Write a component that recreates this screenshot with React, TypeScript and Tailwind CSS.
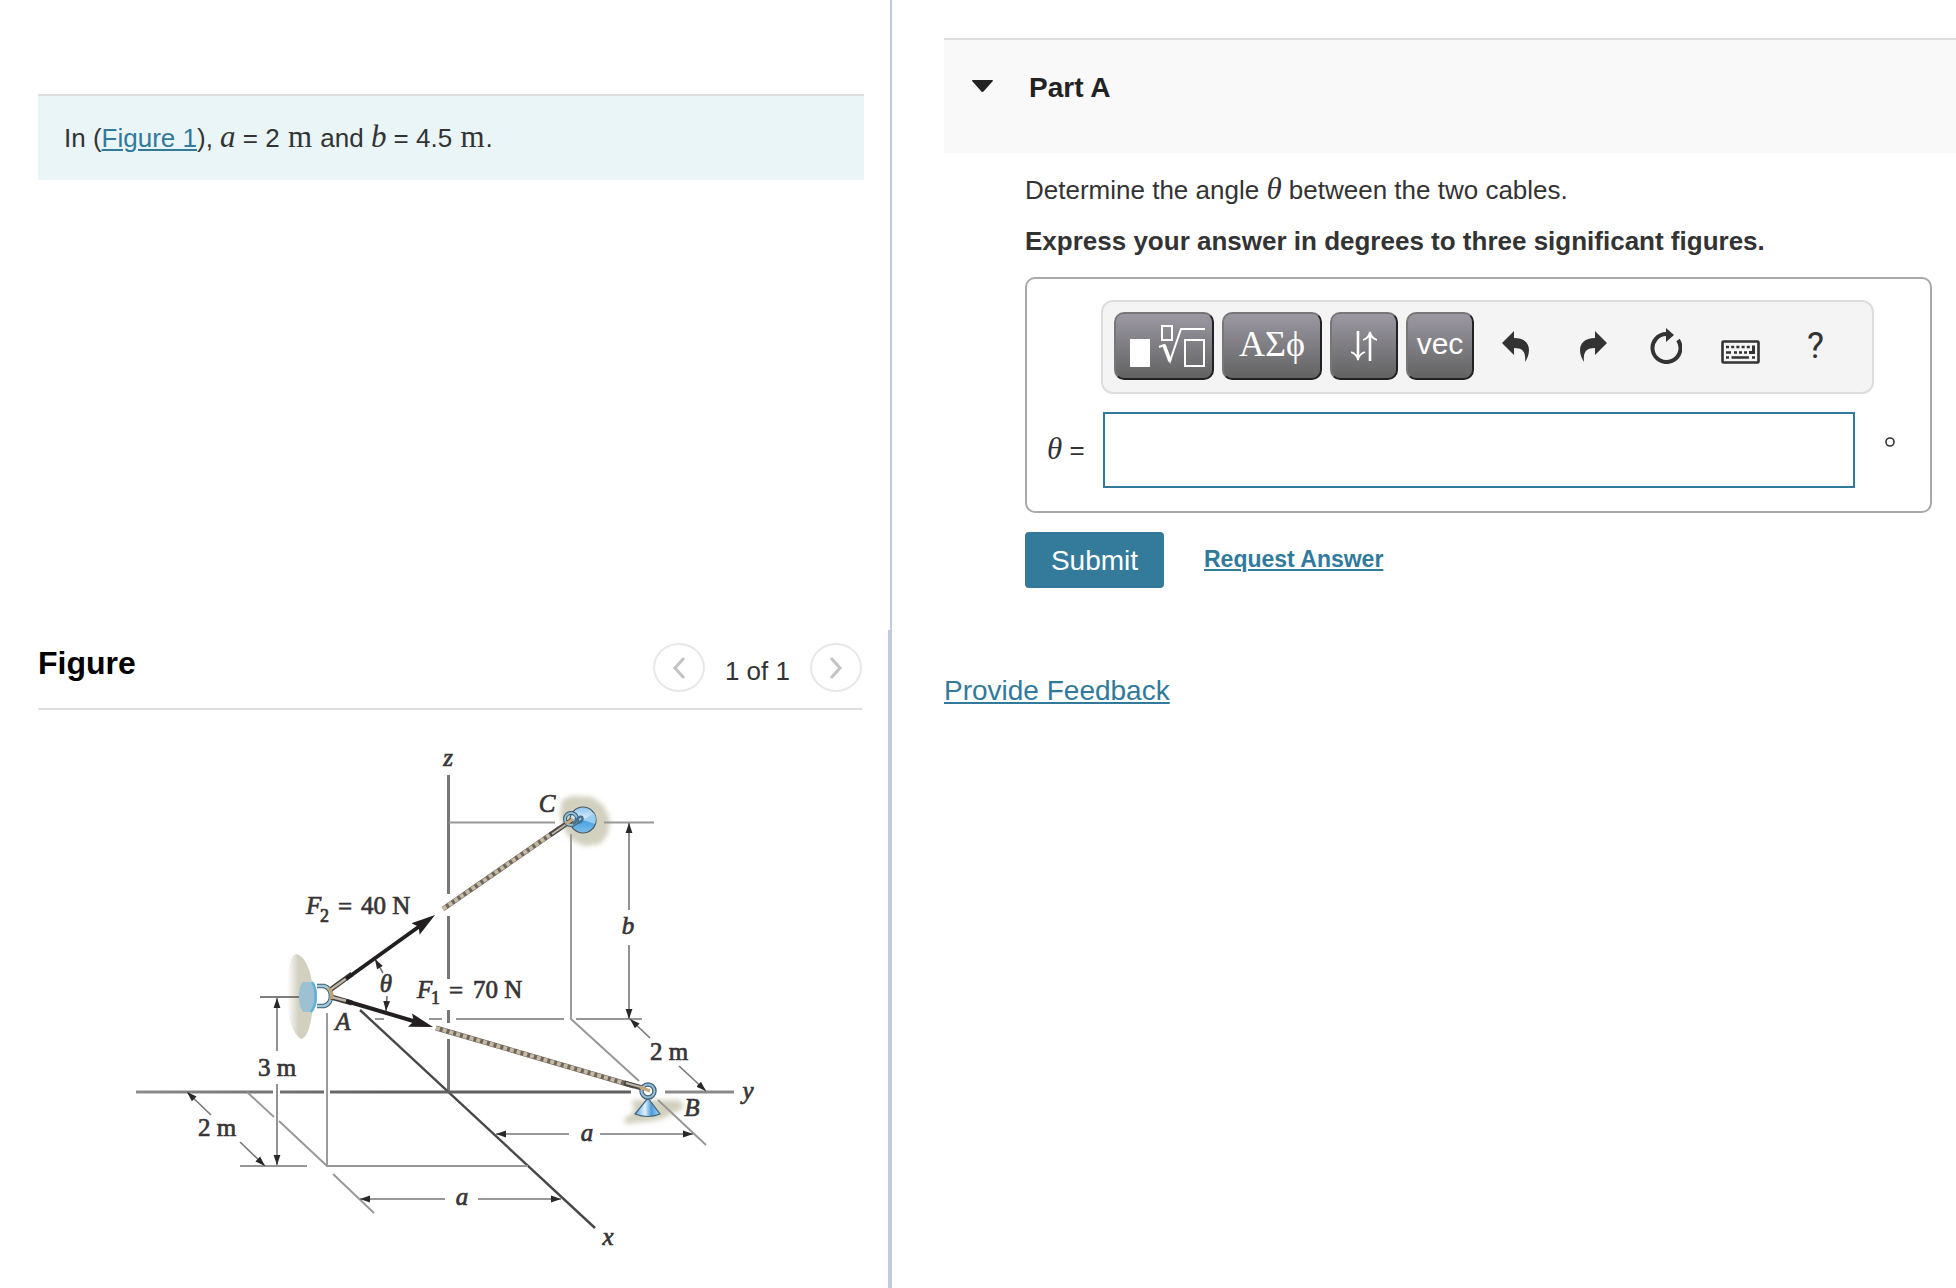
import { ReactNode } from "react";

const linkClass = "text-[#317a9b] underline underline-offset-2 decoration-2";

interface DimProps {
  from: [number, number];
  to: [number, number];
}

// thin dimension line with an arrowhead at its end
function Dim({ from, to }: DimProps) {
  return (
    <line
      x1={from[0]}
      y1={from[1]}
      x2={to[0]}
      y2={to[1]}
      stroke="#777"
      strokeWidth="1.6"
      markerEnd="url(#dimHead)"
    />
  );
}

interface RopeProps {
  d: string;
}

function Rope({ d }: RopeProps) {
  return (
    <g fill="none">
      <path d={d} stroke="#6f675d" strokeWidth="5" />
      <path d={d} stroke="#c8baa2" strokeWidth="4" strokeDasharray="4 3" />
    </g>
  );
}

function CableFigure() {
  return (
    <svg viewBox="38 710 824 560" className="block w-full" role="img" aria-label="Two cables AB and AC attached at A">
      <defs>
        <marker id="dimHead" viewBox="0 0 10 8" refX="10" refY="4" markerWidth="10" markerHeight="8" markerUnits="userSpaceOnUse" orient="auto">
          <path d="M0 0.6 L10 4 L0 7.4 Z" fill="#2b2728" />
        </marker>
        <marker id="forceHead" viewBox="0 0 24 16" refX="24" refY="8" markerWidth="24" markerHeight="16" markerUnits="userSpaceOnUse" orient="auto">
          <path d="M0 1 L24 8 L0 15 L4 8 Z" fill="#231f20" />
        </marker>
        <filter id="soft" x="-20%" y="-20%" width="140%" height="140%">
          <feGaussianBlur stdDeviation="2.5" />
        </filter>
        <linearGradient id="wallFade">
          <stop offset="0" stopColor="#d2d0bf" stopOpacity="0" />
          <stop offset="0.45" stopColor="#d2d0bf" />
        </linearGradient>
        <linearGradient id="ball" x1="0" y1="0" x2="0" y2="1">
          <stop offset="0" stopColor="#8ec3ee" />
          <stop offset="0.42" stopColor="#d3eafb" />
          <stop offset="0.55" stopColor="#4aa3e0" />
          <stop offset="1" stopColor="#7fbdea" />
        </linearGradient>
        <linearGradient id="cone">
          <stop offset="0" stopColor="#5ba6dd" />
          <stop offset="0.4" stopColor="#e2f1fc" />
          <stop offset="0.65" stopColor="#4b9cda" />
          <stop offset="1" stopColor="#a8d2f0" />
        </linearGradient>
        <linearGradient id="yAxis" gradientUnits="userSpaceOnUse" x1="136" y1="0" x2="631" y2="0">
          <stop offset="0" stopColor="#8c8c8c" />
          <stop offset="0.5" stopColor="#606060" />
          <stop offset="1" stopColor="#606060" />
        </linearGradient>
      </defs>

      {/* supports' shaded surfaces */}
      <path d="M562 800 L572 796 L592 797 L604 806 L610 820 L608 834 L600 844 L584 846 L572 840 L564 830 L560 816 Z" fill="#d2d0bf" filter="url(#soft)" />
      <path d="M296 954 C306 956 313 974 313 997 C313 1020 308 1038 301 1039 C290 1032 287 1012 287 990 C287 970 290 956 296 954 Z" fill="url(#wallFade)" />
      <path d="M632 1100 L680 1100 L684 1108 L664 1118 L654 1121 L626 1124 L624 1119 L634 1112 Z" fill="#d2d0bf" filter="url(#soft)" />

      {/* axes */}
      <g stroke="#777" strokeWidth="3" fill="none">
        <path d="M448.5 775 V894 M448.5 916 V979 M448.5 1010 V1023 M448.5 1039 V1092" />
        <path d="M665 1092 H734" stroke="#8a8a8a" />
        <path d="M360 1010 L595 1228" stroke="#484848" strokeWidth="2.4" />
      </g>
      <g fill="url(#yAxis)">
        <rect x="136" y="1090.5" width="137" height="3" />
        <rect x="280" y="1090.5" width="44" height="3" />
        <rect x="330" y="1090.5" width="301" height="3" />
      </g>

      {/* reference lines */}
      <g stroke="#979797" strokeWidth="1.9" fill="none">
        <path d="M449 822.5 H555 M604 822.5 H654" />
        <path d="M571 834 V1019 L639 1081" />
        <path d="M375 1019 H384 M429 1019 H442 M456 1019 H564 M576 1019 H642" />
        <path d="M260 997 H304" stroke="#555" strokeWidth="1.5" />
        <path d="M327 1013 V1166 H528" />
        <path d="M240 1166 H307" />
        <path d="M247 1092 L274 1117 M279 1121 L327 1166" />
        <path d="M333 1174 L374 1213 M658 1100 L706 1145" />
      </g>

      {/* dimensions */}
      <Dim from={[629, 910]} to={[629, 823]} />
      <Dim from={[629, 945]} to={[629, 1019]} />
      <Dim from={[277, 1051]} to={[277, 998]} />
      <Dim from={[277, 1084]} to={[277, 1165]} />
      <Dim from={[211, 1115]} to={[187, 1092]} />
      <Dim from={[240, 1142]} to={[265, 1166]} />
      <Dim from={[650, 1038]} to={[630, 1019]} />
      <Dim from={[679, 1066]} to={[706, 1091]} />
      <Dim from={[569, 1134]} to={[496, 1134]} />
      <Dim from={[600, 1134]} to={[693, 1134]} />
      <Dim from={[445, 1199]} to={[360, 1199]} />
      <Dim from={[478, 1199]} to={[561, 1199]} />
      <Dim from={[383, 973]} to={[375, 959]} />
      <Dim from={[387, 996]} to={[386, 1011]} />

      <Rope d="M443 909 L560 828" />
      <Rope d="M436 1028 L634 1086" />

      {/* ball at C */}
      <circle cx="583" cy="820" r="13" fill="url(#ball)" stroke="#4a5560" strokeWidth="1.2" />
      <path d="M583 820 L594 813 A13 13 0 0 1 595 824 Z" fill="#9bcdf2" />
      <path d="M550 835 L572 820" stroke="#4b4743" strokeWidth="5" />
      <path d="M552 834 L571 821" stroke="#b9b4a8" strokeWidth="2" />
      <circle cx="571" cy="819" r="6" fill="none" stroke="#3f5a6a" strokeWidth="4" />
      <circle cx="571" cy="819" r="6" fill="none" stroke="#8fc0d8" strokeWidth="2" />
      <path d="M573 824 C577 824 576 815 582 817 C584 820 580 823 577 823" fill="none" stroke="#48708a" strokeWidth="2.4" />
      <path d="M566 824 L573 819" stroke="#c9a878" strokeWidth="3" />

      {/* wall plate at A */}
      <path d="M303 982 H312 C316 985 317 991 317 997 C317 1004 315 1009 311 1012 H303 C300 1008 299 1003 299 997 C299 990 300 985 303 982 Z" fill="#9dc1d3" />
      <path d="M312 982 C317 988 317 1005 311 1012" fill="none" stroke="#5fb0dc" strokeWidth="2.4" />
      <path d="M318 987 H324 Q330 989 330 996 Q330 1003 324 1005 H318 Z" fill="#fff" />
      <path d="M317 986 H324 Q331 988 331 996 Q331 1004 324 1006 H317" fill="none" stroke="#4b5b66" strokeWidth="4.6" />
      <path d="M317 986 H324 Q331 988 331 996 Q331 1004 324 1006 H317" fill="none" stroke="#9cc9e2" strokeWidth="2.6" />
      <path d="M330 990 L352 974 M331 997 L352 1003" stroke="#3f3b38" strokeWidth="5" />
      <path d="M330 990 L347 978 M331 997 L347 1001" stroke="#bdb5a6" strokeWidth="2.4" />
      <path d="M328 988 Q334 992 331 999" fill="none" stroke="#c2a273" strokeWidth="3" />

      {/* forces */}
      <path d="M346 979 L424 923" stroke="#231f20" strokeWidth="4" />
      <path d="M346 979 L435 915" stroke="none" markerEnd="url(#forceHead)" />
      <path d="M346 1001 L420 1023" stroke="#231f20" strokeWidth="4" />
      <path d="M346 1001 L433 1027" stroke="none" markerEnd="url(#forceHead)" />

      {/* pin at B */}
      <path d="M624 1083 L646 1089" stroke="#4b4743" strokeWidth="5" />
      <path d="M626 1083 L644 1088" stroke="#b9b4a8" strokeWidth="2" />
      <path d="M648 1098 L660 1114 Q648 1119 635 1114 Z" fill="url(#cone)" stroke="#44617a" strokeWidth="1.2" />
      <circle cx="648" cy="1091" r="6.5" fill="#fff" stroke="#3f5a6a" strokeWidth="4.4" />
      <circle cx="648" cy="1091" r="6.5" fill="none" stroke="#8fc0d8" strokeWidth="2.2" />
      <path d="M640 1087 L650 1091" stroke="#c9a878" strokeWidth="3" />

      <g fill="#383435" stroke="#383435" strokeWidth="0.7" className="text-[25px] font-['Liberation_Serif',serif]">
        <text x="258" y="1076">3 m</text>
        <text x="198" y="1136">2 m</text>
        <text x="650" y="1060">2 m</text>
        <text x="338" y="915">=</text>
        <text x="361" y="914">40 N</text>
        <text x="449" y="999">=</text>
        <text x="473" y="998">70 N</text>
        <text x="320" y="922" className="text-[18px]">2</text>
        <text x="431" y="1004" className="text-[18px]">1</text>
        <g className="italic">
          <text x="306" y="914">F</text>
          <text x="417" y="998">F</text>
          <g textAnchor="middle">
            <text x="448" y="766">z</text>
            <text x="547" y="812">C</text>
            <text x="628" y="934">b</text>
            <text x="386" y="992">θ</text>
            <text x="343" y="1030">A</text>
            <text x="692" y="1116">B</text>
            <text x="748" y="1099">y</text>
            <text x="587" y="1141">a</text>
            <text x="462" y="1205">a</text>
            <text x="608" y="1245">x</text>
          </g>
        </g>
      </g>
    </svg>
  );
}

function MathVar({ children }: { children: ReactNode }) {
  return <i className="font-['Liberation_Serif',serif] text-[31px] leading-none">{children}</i>;
}

function Unit({ children }: { children: ReactNode }) {
  return <span className="mx-px font-['Liberation_Serif',serif] text-[31px] leading-none">{children}</span>;
}

interface PadButtonProps {
  label: string;
  wide?: boolean;
  children: ReactNode;
}

function PadButton({ label, wide, children }: PadButtonProps) {
  return (
    <button
      aria-label={label}
      className={`${wide ? "w-[100px]" : "w-[68px]"} flex h-[68px] shrink-0 items-center justify-center rounded-[10px] border-2 border-t-[#777] border-l-[#777] border-r-[#222] border-b-[#222] bg-linear-to-b from-[#9b98a2] to-[#636363] text-white`}
    >
      {children}
    </button>
  );
}

function IconButton({ label, children }: { label: string; children: ReactNode }) {
  return (
    <button aria-label={label} className="flex h-[68px] w-[75px] items-center justify-center text-[#333]">
      {children}
    </button>
  );
}

function PagerButton({ label, d }: { label: string; d: string }) {
  return (
    <button aria-label={label} className="flex h-[49px] w-[52px] items-center justify-center rounded-[50%] border-2 border-[#e8e8e8]">
      <svg width="14" height="24" viewBox="0 0 14 24" fill="none" stroke="#c4c4c4" strokeWidth="3">
        <path d={d} />
      </svg>
    </button>
  );
}

function Toolbar() {
  return (
    <div className="mr-14 ml-[74px] flex h-[94px] items-start gap-2 rounded-xl border-2 border-[#ddd] bg-[#f4f4f4] px-[11px] pt-2.5">
      <PadButton label="Templates" wide>
        <svg width="76" height="44" viewBox="0 0 76 44" className="ml-2" fill="none" stroke="#fff" strokeWidth="2">
          <rect x="0" y="15" width="20" height="28" fill="#fff" stroke="none" />
          <rect x="32" y="2" width="10" height="14" />
          <path d="M29 23 L34 21 L40 37 L51 5 H75" />
          <path d="M34 21 L40 37" strokeWidth="3.6" />
          <rect x="55" y="16" width="19" height="26" />
        </svg>
      </PadButton>
      <PadButton label="Symbols" wide>
        <span className="pb-1 font-['Liberation_Serif','DejaVu_Serif',serif] text-[36px] leading-none">ΑΣϕ</span>
      </PadButton>
      <PadButton label="Arrows">
        <svg width="26" height="30" viewBox="0 0 26 30" fill="none" stroke="#fff" strokeWidth="2.6">
          <path d="M7 0 V27 M19 30 V3" />
          <path d="M0 21 Q6 23 7 29 Q8 23 14 21 M12 9 Q18 7 19 1 Q20 7 26 9" strokeWidth="1.8" />
        </svg>
      </PadButton>
      <PadButton label="Vectors">
        <span className="pb-1 text-[30px] leading-none">vec</span>
      </PadButton>
      <div className="-ml-1 flex">
        <IconButton label="Undo">
          <svg width="27" height="31" viewBox="0 0 27 31" fill="currentColor">
            <path d="M0 12 L12 0 V7 C22 7 27 12 27 19 C27 24 25 28 23 31 C24 21 21 17 12 17 V24 Z" />
          </svg>
        </IconButton>
        <IconButton label="Redo">
          <svg width="27" height="31" viewBox="0 0 27 31" className="ml-1.5" fill="currentColor">
            <path d="M27 12 L15 0 V7 C5 7 0 12 0 19 C0 24 2 28 4 31 C3 21 6 17 15 17 V24 Z" />
          </svg>
        </IconButton>
        <IconButton label="Reset">
          <svg width="32" height="36" viewBox="0 0 32 36">
            <path d="M17 6 A14 14 0 1 0 28 12" fill="none" stroke="currentColor" strokeWidth="4" />
            <path d="M16 0 L24 7 L16 14 Z" fill="currentColor" />
          </svg>
        </IconButton>
        <IconButton label="Keyboard">
          <svg width="39" height="32" viewBox="0 0 39 32" className="mt-1" fill="none" stroke="currentColor">
            <rect x="1.5" y="9.5" width="36" height="21" rx="1" strokeWidth="2.6" />
            <path d="M5 15 H29" strokeWidth="2.4" strokeDasharray="3 2.2" />
            <path d="M5 20.5 H10 M13 20.5 H16 M18 20.5 H21 M23 20.5 H26" strokeWidth="2.4" />
            <path d="M28 20.5 H32.5 V13.5" strokeWidth="3" />
            <path d="M5 25.5 H8 M10.5 25.5 H28 M31 25.5 H34" strokeWidth="2.4" />
          </svg>
        </IconButton>
        <IconButton label="Help">
          <span className="font-['Roboto',sans-serif] text-[36px] leading-none">?</span>
        </IconButton>
      </div>
    </div>
  );
}

function ProblemPane() {
  return (
    <section className="flex flex-col">
      <div className="h-[630px] border-r-2 border-[#c2cbdb] pt-[94px] pr-[26px] pl-[38px]">
        <div className="flex h-[86px] items-center border-t-2 border-[#ddd] bg-[#eaf5f7] px-[26px]">
          <p>
            In (<a href="#figure" className={linkClass}>Figure 1</a>), <MathVar>a</MathVar> = 2 <Unit>m</Unit> and{" "}
            <MathVar>b</MathVar> = 4.5 <Unit>m</Unit>.
          </p>
        </div>
      </div>
      <div id="figure" className="flex-1 border-r-4 border-[#c2cbdb] pr-[26px] pl-[38px]">
        <div className="flex h-20 items-start justify-between border-b-2 border-[#ddd] pt-[13px]">
          <h2 className="pt-1 text-[32px] leading-none font-bold text-black">Figure</h2>
          <div className="flex items-center gap-5">
            <PagerButton label="Previous figure" d="M12 2 L3 12 L12 22" />
            <span className="pt-2">1 of 1</span>
            <PagerButton label="Next figure" d="M2 2 L11 12 L2 22" />
          </div>
        </div>
        <CableFigure />
      </div>
    </section>
  );
}

function AnswerPane() {
  return (
    <section className="pt-[38px] pl-[52px]">
      <header className="flex h-[115px] items-start gap-9 border-t-2 border-[#ddd] bg-[#f9f9f9] pt-8 pl-7">
        <button aria-label="Collapse Part A" className="pt-2 text-[#222]">
          <svg width="21" height="12" viewBox="0 0 21 12" fill="currentColor">
            <path d="M1 0 H20 Q22 0 20 2 L12 11 Q10 13 9 11 L1 2 Q-1 0 1 0 Z" />
          </svg>
        </button>
        <h1 className="text-[28px] leading-8 font-bold text-[#222]">Part A</h1>
      </header>

      <div className="pt-[19px] pr-6 pl-[81px]">
        <p className="leading-9">
          Determine the angle <MathVar>θ</MathVar> between the two cables.
        </p>
        <p className="pt-[15px] leading-9 font-bold">Express your answer in degrees to three significant figures.</p>

        <div className="mt-[18px] rounded-[10px] border-2 border-[#a9a9a9] pt-[21px] pb-[23px]">
          <Toolbar />
          <div className="mt-[18px] flex items-center">
            <label htmlFor="theta" className="w-[76px] pl-5">
              <MathVar>θ</MathVar> =
            </label>
            <input id="theta" type="text" className="h-[76px] min-w-0 flex-1 border-2 border-[#317a9b] bg-white px-3 outline-none" />
            <span className="w-[75px] pb-4 pl-[30px]">
              <svg width="10" height="10" viewBox="0 0 10 10" role="img" aria-label="degrees">
                <circle cx="5" cy="5" r="4" fill="none" stroke="#333" strokeWidth="1.6" />
              </svg>
            </span>
          </div>
        </div>

        <div className="mt-[19px] flex items-center gap-10">
          <button className="h-14 w-[139px] rounded-sm bg-[#337a9b] pt-px text-[28px] text-white">Submit</button>
          <a href="#request" className={`${linkClass} pb-0.5 text-[23px] font-bold`}>Request Answer</a>
        </div>
      </div>

      <a href="#feedback" className={`${linkClass} mt-[85px] inline-block text-[28px] leading-9`}>Provide Feedback</a>
    </section>
  );
}

export default function App() {
  return (
    <main className="grid min-h-screen grid-cols-[223fr_266fr] bg-white font-['Liberation_Sans',Arial,sans-serif] text-[26px] text-[#333]">
      <ProblemPane />
      <AnswerPane />
    </main>
  );
}
